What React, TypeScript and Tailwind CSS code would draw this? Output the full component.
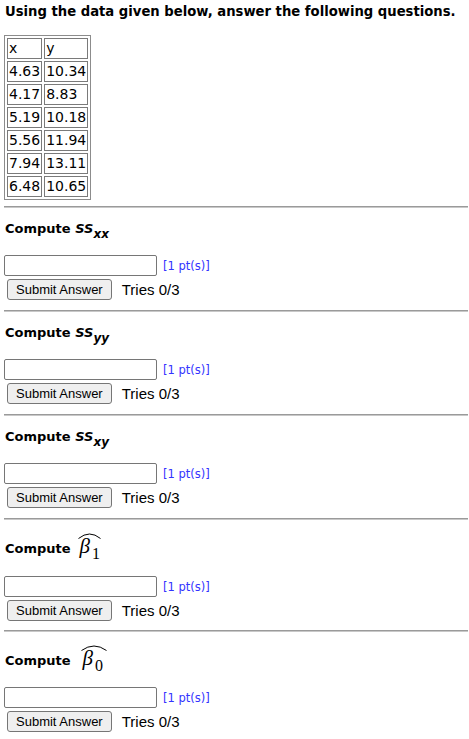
import React from "react";

const rows: [string, string][] = [
  ["x", "y"],
  ["4.63", "10.34"],
  ["4.17", "8.83"],
  ["5.19", "10.18"],
  ["5.56", "11.94"],
  ["7.94", "13.11"],
  ["6.48", "10.65"],
];

function Hr() {
  return <div className="h-0 w-[464px] border-t border-b border-t-[#9a9a9a] border-b-[#c8c8c8]" />;
}

function AnswerRows({ inputMt }: { inputMt: string }) {
  return (
    <>
      <div className={`${inputMt} flex h-[21px] items-center`}>
        <div className="h-[21px] w-[153px] rounded-[2px] border border-[#767676] bg-white" />
        <span className="ml-[6px] text-[11.5px] leading-[14px] text-[#3333ff]">[1 pt(s)]</span>
      </div>
      <div className="mt-[3px] flex h-[21px] items-center">
        <div className="ml-[3px] flex h-[21px] items-center rounded-[3px] border border-[#767676] bg-[#efefef] px-[8px] font-['Liberation_Sans',Arial,sans-serif] text-[13px] leading-[15px] text-black">
          Submit Answer
        </div>
        <span className="ml-[10px] font-['Liberation_Sans',Arial,sans-serif] text-[15px] leading-[17px]">Tries 0/3</span>
      </div>
    </>
  );
}

function SSSection({ sub }: { sub: string }) {
  return (
    <div>
      <div className="mt-[13px] h-[16px] whitespace-nowrap pl-[1px] text-[13px] font-bold leading-[16px]">
        Compute <span className="italic">SS</span>
        <span className="align-[-5px] text-[12px] italic">{sub}</span>
      </div>
      <AnswerRows inputMt="mt-[18px]" />
    </div>
  );
}

function BetaSection({ sub, hatW, gap, mt, inputMt }: { sub: string; hatW: number; gap: string; mt: string; inputMt: string }) {
  return (
    <div>
      <div className={`${mt} flex items-baseline pl-[1px]`}>
        <span className="text-[13px] font-bold leading-[16px]">Compute</span>
        <div className={`relative ${gap} pt-[5px] font-['Liberation_Serif',serif] text-[21px] leading-[19px]`}>
          <svg className="absolute left-0 top-0" width={hatW} height={7} viewBox={`0 0 ${hatW} 7`}>
            <path d={`M0.5 6.5 Q${hatW / 2} -2.5 ${hatW - 0.5} 6.5`} fill="none" stroke="#000" strokeWidth="1" />
          </svg>
          <span className="ml-[2px] italic">β</span>
          <span className="ml-[2px] align-[-6px] text-[16px]">{sub}</span>
        </div>
      </div>
      <AnswerRows inputMt={inputMt} />
    </div>
  );
}

export default function App() {
  return (
    <div className="h-[739px] w-[469px] overflow-hidden bg-white pl-[4px] font-['DejaVu_Sans',Verdana,sans-serif] text-black">
      <div className="pl-[1px] pt-[4px] text-[13.2px] font-bold leading-[16px] whitespace-nowrap">
        Using the data given below, answer the following questions.
      </div>
      <table className="mt-[15px] border-separate border-spacing-[2px] border border-[#8c8c8c]">
        <tbody>
          {rows.map((r, i) => (
            <tr key={i}>
              {r.map((c, j) => (
                <td key={j} className="border border-[#7a7a7a] p-[1px] text-left text-[14px] leading-[17px]">
                  {c}
                </td>
              ))}
            </tr>
          ))}
        </tbody>
      </table>
      <div className="mt-[6px]">
        <Hr />
      </div>
      <SSSection sub="xx" />
      <div className="mt-[10px]">
        <Hr />
      </div>
      <SSSection sub="yy" />
      <div className="mt-[10px]">
        <Hr />
      </div>
      <SSSection sub="xy" />
      <div className="mt-[10px]">
        <Hr />
      </div>
      <BetaSection sub="1" hatW={23} gap="ml-[7px]" mt="mt-[12px]" inputMt="mt-[13px]" />
      <div className="mt-[9px]">
        <Hr />
      </div>
      <BetaSection sub="0" hatW={26} gap="ml-[10px]" mt="mt-[12px]" inputMt="mt-[12px]" />
    </div>
  );
}
